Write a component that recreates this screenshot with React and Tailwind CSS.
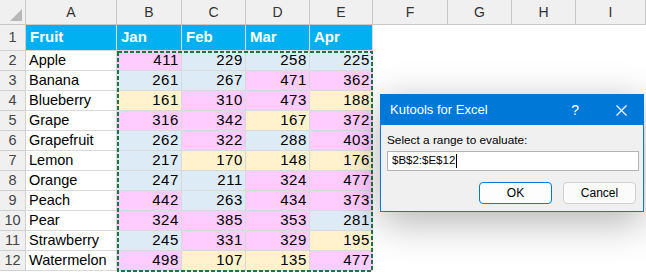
const fruits = [
  ["Apple", 411, 229, 258, 225],
  ["Banana", 261, 267, 471, 362],
  ["Blueberry", 161, 310, 473, 188],
  ["Grape", 316, 342, 167, 372],
  ["Grapefruit", 262, 322, 288, 403],
  ["Lemon", 217, 170, 148, 176],
  ["Orange", 247, 211, 324, 477],
  ["Peach", 442, 263, 434, 373],
  ["Pear", 324, 385, 353, 281],
  ["Strawberry", 245, 331, 329, 195],
  ["Watermelon", 498, 107, 135, 477],
];

const letters = ["A", "B", "C", "D", "E", "F", "G", "H", "I"];

// >=300 pink, >=200 blue, else yellow
const fill = (v) => (v >= 300 ? "bg-[#ffccff]" : v >= 200 ? "bg-[#ddebf7]" : "bg-[#fff2cc]");

function RowNum({ n, tall }) {
  return (
    <div
      className={`flex items-center justify-center border-r border-b border-[#d0d0d0] bg-[#f0f0f0] text-[14.5px] text-[#444] ${tall ? "h-[26px]" : "h-[20px]"}`}
    >
      {n}
    </div>
  );
}

function Blank({ tall }) {
  return <div className={`bg-white ${tall ? "h-[26px]" : "h-[20px]"}`} />;
}

export default function App() {
  return (
    <div
      className="relative w-[646px] h-[273px] overflow-hidden bg-white"
      style={{ fontFamily: '"Liberation Sans", Arial, sans-serif' }}
    >
      <div className="grid grid-cols-[26px_91px_65px_64px_64px_63px_75px_64px_64px_70px]">
        {/* column headers */}
        <div className="relative h-[25px] border-r border-b border-[#c8c8c8] bg-[#f0f0f0]">
          <svg className="absolute right-[3px] bottom-[3px]" width="12" height="12" viewBox="0 0 12 12">
            <polygon points="12,0 12,12 0,12" fill="#b8b8b8" />
          </svg>
        </div>
        {letters.map((l) => (
          <div
            key={l}
            className="flex h-[25px] items-center justify-center border-r border-b border-[#c8c8c8] bg-[#f0f0f0] text-[14px] text-[#333]"
          >
            {l}
          </div>
        ))}

        {/* row 1 */}
        <RowNum n={1} tall />
        {["Fruit", "Jan", "Feb", "Mar", "Apr"].map((h) => (
          <div
            key={h}
            className="flex h-[26px] items-center border-r border-b border-[#d9d9d9] bg-[#00b0f0] pl-[4px] text-[15px] font-bold text-white"
          >
            {h}
          </div>
        ))}
        {[0, 1, 2, 3].map((i) => (
          <Blank key={i} tall />
        ))}

        {fruits.map((r, i) => (
          <div key={r[0]} className="contents">
            <RowNum n={i + 2} />
            <div className="flex h-[20px] items-center border-r border-b border-[#d9d9d9] bg-white pl-[3px] text-[14.5px] text-black">
              {r[0]}
            </div>
            {r.slice(1).map((v, j) => (
              <div
                key={j}
                className={`flex h-[20px] items-center justify-end border-r border-b border-[#d9d9d9] pr-[2px] text-[15px] tracking-[0.6px] text-black ${fill(v)}`}
              >
                {v}
              </div>
            ))}
            {[0, 1, 2, 3].map((k) => (
              <Blank key={k} />
            ))}
          </div>
        ))}
      </div>

      {/* copy range marquee */}
      <svg className="absolute left-[117px] top-[51px]" width="256" height="221">
        <rect x="1" y="1" width="254" height="219" fill="none" stroke="#217346" strokeWidth="2" strokeDasharray="4 2" />
      </svg>

      {/* dialog */}
      <div className="absolute left-[380px] top-[94px] w-[264px] border border-[#0078d7] bg-[#f0f0f0] shadow-[0_10px_40px_rgba(0,0,0,0.3)]">
        <div className="flex h-[30px] items-center bg-[#0078d7] pl-[9px] text-white">
          <span className="text-[13px]">Kutools for Excel</span>
          <span className="ml-auto mr-[37px] text-[14px]">?</span>
          <svg className="mr-[16px]" width="11" height="11" viewBox="0 0 11 11">
            <path d="M0.5 0.5L10.5 10.5M10.5 0.5L0.5 10.5" stroke="white" strokeWidth="1.1" />
          </svg>
        </div>
        <div className="px-[6px] pt-[9px] pb-[7px]">
          <div className="text-[11.8px] leading-[13px] text-black">Select a range to evaluate:</div>
          <div className="mt-[4px] flex h-[20px] w-[252px] items-center border border-[#b4b4b4] bg-white pl-[4px] text-[11.5px] text-black">
            $B$2:$E$12
            <span className="ml-[1px] inline-block h-[14px] w-px bg-black" />
          </div>
          <div className="mt-[11px] flex justify-end gap-[11px] pr-[1px]">
            <button className="h-[22px] w-[73px] rounded-[4px] border border-[#0078d7] bg-[#fdfdfd] text-[12px] text-black">
              OK
            </button>
            <button className="h-[22px] w-[73px] rounded-[4px] border border-[#d0d0d0] bg-[#fbfbfb] text-[12px] text-black">
              Cancel
            </button>
          </div>
        </div>
      </div>
    </div>
  );
}
